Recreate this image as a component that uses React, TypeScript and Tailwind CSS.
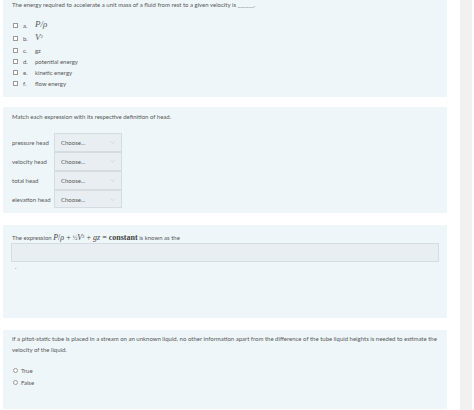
import { ChevronDown } from "lucide-react";

const OPTIONS: { key: string; text: React.ReactNode; h: string }[] = [
  { key: "a.", h: "h-[12px]", text: <span className="font-['Liberation_Serif',serif] italic text-[9px]">P/ρ</span> },
  {
    key: "b.",
    h: "h-[14px]",
    text: (
      <span className="font-['Liberation_Serif',serif] italic text-[9px]">
        V<sup className="text-[5px] not-italic">2</sup>
      </span>
    ),
  },
  { key: "c.", h: "h-[11px]", text: "gz" },
  { key: "d.", h: "h-[11px]", text: "potential energy" },
  { key: "e.", h: "h-[11px]", text: "kinetic energy" },
  { key: "f.", h: "h-[11px]", text: "flow energy" },
];

const HEADS = ["pressure head", "velocity head", "total head", "elevation head"];

function Checkbox() {
  return <span className="w-[5px] h-[5px] border-[0.5px] border-[#9a9a9a] bg-white shrink-0" />;
}

function Radio() {
  return <span className="w-[5px] h-[5px] border-[0.5px] border-[#9a9a9a] rounded-full bg-white shrink-0" />;
}

export default function App() {
  return (
    <div className="w-[474px] h-[410px] bg-white flex font-['Lato','Open_Sans',sans-serif] text-[6px] text-[#585858] overflow-hidden">
      <div className="w-[444px] ml-[3px] flex flex-col">
        {/* Question 1 */}
        <div className="h-[97px] bg-[#eef6fa] px-[9px]">
          <p className="h-[10px] leading-[10px]">
            The energy required to accelerate a unit mass of a fluid from rest to a given velocity is ______.
          </p>
          <div className="mt-[9px] flex flex-col">
            {OPTIONS.map(o => (
              <div key={o.key} className={`${o.h} flex items-center`}>
                <span className="ml-[1px] flex"><Checkbox /></span>
                <span className="ml-[5px] w-[12px]">{o.key}</span>
                <span>{o.text}</span>
              </div>
            ))}
          </div>
        </div>

        {/* Question 2 */}
        <div className="mt-[10px] h-[106px] bg-[#eef6fa] px-[9px]">
          <p className="mt-[5px] h-[10px] leading-[10px]">Match each expression with its respective definition of head.</p>
          <div className="mt-[11px] flex flex-col">
            {HEADS.map((h, i) => (
              <div key={h} className={`${i === 3 ? "h-[18px]" : "h-[19px]"} flex items-center`}>
                <span className="w-[42px] shrink-0">{h}</span>
                <div className="w-[68px] h-full border-[0.5px] border-[#d6dde2] bg-[#e8eef2] flex items-center justify-between pl-[6px] pr-[5px]">
                  <span>Choose...</span>
                  <ChevronDown className="w-[7px] h-[7px] text-[#b3bdc5]" strokeWidth={1.5} />
                </div>
              </div>
            ))}
          </div>
        </div>

        {/* Question 3 */}
        <div className="mt-[12px] h-[93px] bg-[#eef6fa] px-[8px]">
          <p className="mt-[8px] h-[10px] leading-[10px] flex items-end">
            <span className="ml-[1px]">The expression&nbsp;</span>
            <span className="font-['Liberation_Serif',serif] text-[8px] leading-[10px] text-[#444]">
              <i>P</i>/<i>ρ</i> + <span className="text-[6px]">½</span>
              <i>V</i>
              <sup className="text-[5px]">2</sup> + <i>gz</i> = <b>constant</b>
            </span>
            <span>&nbsp;is known as the</span>
          </p>
          <div className="h-[19px] border-[0.5px] border-[#d6dde2] bg-[#e8eef2]" />
          <p className="mt-[1px] ml-[4px] leading-[8px]">.</p>
        </div>

        {/* Question 4 */}
        <div className="mt-[12px] h-[79px] bg-[#eef6fa] px-[9px]">
          <p className="mt-[3px] leading-[11px]">
            If a pitot-static tube is placed in a stream on an unknown liquid, no other information apart from the difference of the tube liquid heights is needed to estimate the velocity of the liquid.
          </p>
          <div className="mt-[9px] flex flex-col">
            <div className="h-[12px] flex items-center">
              <span className="ml-[1px] flex"><Radio /></span>
              <span className="ml-[3px]">True</span>
            </div>
            <div className="h-[12px] flex items-center">
              <span className="ml-[1px] flex"><Radio /></span>
              <span className="ml-[3px]">False</span>
            </div>
          </div>
        </div>
      </div>
      <div className="ml-[13px] w-[12px] h-full bg-[#f1f1f1]" />
    </div>
  );
}
